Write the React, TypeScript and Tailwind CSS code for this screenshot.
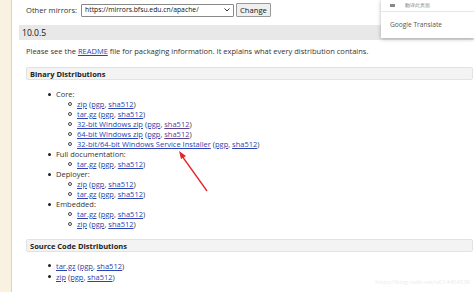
const font = { fontFamily: '"Open Sans", "Noto Sans", sans-serif' };

type Link = { text: string; visited?: boolean };

const A = ({ text, visited }: Link) => (
  <span className={`underline ${visited ? 'text-[#5a3f96]' : 'text-[#2b43b4]'}`}>{text}</span>
);

const Entry = ({ main, pgp, sha }: { main: Link; pgp?: boolean; sha?: boolean }) => (
  <span>
    <A {...main} /> (<A text="pgp" visited={pgp} />, <A text="sha512" visited={sha} />)
  </span>
);

const Top = ({ label, children }: { label: string; children?: React.ReactNode }) => (
  <div>
    <div className="flex items-center h-[10px]">
      <span className="w-[44px] pl-[36px] flex">
        <span className="w-[3px] h-[3px] bg-[#222] rounded-full" />
      </span>
      <span>{label}</span>
    </div>
    {children}
  </div>
);

const Sub = ({ children }: { children: React.ReactNode }) => (
  <div className="flex items-center h-[10px]">
    <span className="w-[65px] pl-[56px] flex">
      <span className="w-[4px] h-[4px] border border-[#444] rounded-full" />
    </span>
    {children}
  </div>
);

const SourceItem = ({ children }: { children: React.ReactNode }) => (
  <div className="flex items-center h-[11px]">
    <span className="w-[44px] pl-[36px] flex">
      <span className="w-[3px] h-[3px] bg-[#222] rounded-full" />
    </span>
    {children}
  </div>
);

export default function App() {
  return (
    <div
      className="w-[474px] h-[292px] overflow-hidden relative flex bg-white text-[#222] text-[7.5px] leading-[10px]"
      style={font}
    >
      <div className="w-[12px] shrink-0 bg-[#faf2e1] border-r border-[#d9d3c6]" />
      <div className="flex-1 relative">
        <div className="h-[20px] flex items-center pl-[14px] text-[#333]">
          <span className="text-[7.6px]">Other mirrors:</span>
          <div className="ml-[4px] w-[153px] h-[13px] border border-[#888] rounded-[1px] flex items-center justify-between px-[3px] text-[6.8px] text-[#111]">
            <span>https://mirrors.bfsu.edu.cn/apache/</span>
            <svg width="6" height="4" viewBox="0 0 6 4">
              <path d="M0.5 0.5 L3 3 L5.5 0.5" stroke="#333" strokeWidth="1" fill="none" />
            </svg>
          </div>
          <div className="ml-[2px] h-[14px] px-[3px] border border-[#999] bg-[#efefef] rounded-[1px] flex items-center text-[7.6px] text-[#111]">
            Change
          </div>
        </div>

        <div className="mt-[5px] ml-[7px] h-[15px] bg-[#e8e8e8] flex items-center pl-[3px] text-[8.6px] font-medium text-[#111]">
          10.0.5
        </div>

        <div className="mt-[6px] pl-[14px] h-[10px] text-[#333] whitespace-nowrap">
          Please see the <A text="README" /> file for packaging information. It explains what every distribution contains.
        </div>

        <div className="mt-[11px] ml-[14px] mr-[1px] h-[13px] bg-[#f3f3f3] border border-[#e2e2e2] rounded-[2px] flex items-center pl-[3px] font-bold text-[#222]">
          Binary Distributions
        </div>

        <div className="mt-[9px] text-[#333]">
          <Top label="Core:">
            <Sub><Entry main={{ text: 'zip' }} /></Sub>
            <Sub><Entry main={{ text: 'tar.gz' }} /></Sub>
            <Sub><Entry main={{ text: '32-bit Windows zip' }} sha /></Sub>
            <Sub><Entry main={{ text: '64-bit Windows zip' }} sha /></Sub>
            <Sub><Entry main={{ text: '32-bit/64-bit Windows Service Installer' }} /></Sub>
          </Top>
          <Top label="Full documentation:">
            <Sub><Entry main={{ text: 'tar.gz' }} /></Sub>
          </Top>
          <Top label="Deployer:">
            <Sub><Entry main={{ text: 'zip' }} /></Sub>
            <Sub><Entry main={{ text: 'tar.gz' }} /></Sub>
          </Top>
          <Top label="Embedded:">
            <Sub><Entry main={{ text: 'tar.gz' }} /></Sub>
            <Sub><Entry main={{ text: 'zip' }} /></Sub>
          </Top>
        </div>

        <div className="mt-[10px] ml-[14px] mr-[1px] h-[13px] bg-[#f3f3f3] border border-[#e2e2e2] rounded-[2px] flex items-center pl-[3px] font-bold text-[#222]">
          Source Code Distributions
        </div>

        <div className="mt-[8px] text-[#333]">
          <SourceItem><Entry main={{ text: 'tar.gz' }} /></SourceItem>
          <SourceItem><Entry main={{ text: 'zip' }} /></SourceItem>
        </div>

        <div className="absolute right-[4px] bottom-[5px] text-[6px] text-[#ececec]">
          https://blog.csdn.net/u014454538
        </div>
      </div>

      <div className="absolute top-0 right-0 w-[93px] h-[38px] bg-white shadow-[0_1px_4px_rgba(0,0,0,0.3)]">
        <div className="h-[12px] border-b border-[#e6e6e6] flex items-center pl-[9px] gap-[10px]">
          <span className="w-[5px] h-[3px] bg-[#888]" />
          <span className="text-[5px] text-[#888] leading-[5px]">翻译此页面</span>
        </div>
        <div className="pl-[9px] pt-[8px] text-[6.6px] text-[#555]">Google Translate</div>
      </div>

      <svg className="absolute left-0 top-0" width="474" height="292" viewBox="0 0 474 292">
        <line x1="207" y1="191" x2="182" y2="156" stroke="#e3262b" strokeWidth="1.3" />
        <path d="M179 151 L186 156 L181 159 Z" fill="#e3262b" />
      </svg>
    </div>
  );
}
